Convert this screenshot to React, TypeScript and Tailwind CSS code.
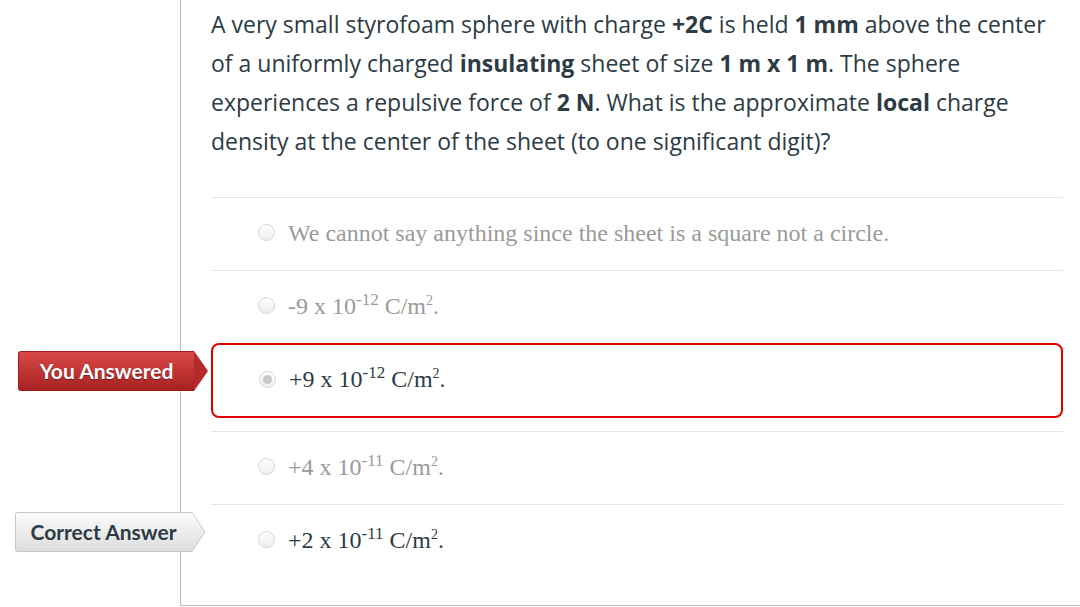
import React from "react";

type Answer = {
  text: React.ReactNode;
  faded: boolean;
  selected?: boolean;
  badge?: "you" | "correct";
};

const Sci = ({ sign, mant, exp }: { sign: string; mant: string; exp: string }) => (
  <span>
    {sign}
    {mant} x 10<span className="text-[17px] relative top-[-9px]">{exp}</span> C/m
    <span className="text-[14px] relative top-[-9px]">2</span>.
  </span>
);

const answers: Answer[] = [
  { text: "We cannot say anything since the sheet is a square not a circle.", faded: true },
  { text: <Sci sign="-" mant="9" exp="-12" />, faded: true },
  { text: <Sci sign="+" mant="9" exp="-12" />, faded: false, selected: true, badge: "you" },
  { text: <Sci sign="+" mant="4" exp="-11" />, faded: true },
  { text: <Sci sign="+" mant="2" exp="-11" />, faded: false, badge: "correct" },
];

const Radio = ({ selected }: { selected?: boolean }) => (
  <span className="w-[17px] h-[17px] rounded-full border border-[#d6d6d6] bg-gradient-to-b from-white to-[#ededed] flex items-center justify-center shrink-0">
    {selected && <span className="w-[9px] h-[9px] rounded-full bg-[#c8c8c8]" />}
  </span>
);

const YouAnswered = () => (
  <div className="absolute left-[-193px] top-[8px] flex items-center">
    <div className="h-[40px] w-[176px] rounded-l-[3px] bg-gradient-to-b from-[#d94848] to-[#a82020] border border-[#9e1f1f] border-r-0 flex items-center justify-center text-white font-bold text-[21px] [font-family:Lato,sans-serif] [text-shadow:0_1px_1px_rgba(0,0,0,0.4)]">
      You Answered
    </div>
    <div className="w-0 h-0 border-y-[20px] border-y-transparent border-l-[14px] border-l-[#b52b2b]" />
  </div>
);

const CorrectAnswer = () => (
  <div className="absolute left-[-196px] top-[7px] flex items-center">
    <div className="h-[40px] w-[176px] rounded-l-[3px] bg-gradient-to-b from-[#fbfbfb] to-[#dedede] border border-[#c8c8c8] border-r-0 flex items-center justify-center text-[#2d3b45] font-bold text-[21px] [font-family:Lato,sans-serif]">
      Correct Answer
    </div>
    <div className="relative w-[15px] h-[40px]">
      <svg width="16" height="40" viewBox="0 0 16 40" className="absolute left-[-1px] top-0">
        <defs>
          <linearGradient id="cg" x1="0" y1="0" x2="0" y2="1">
            <stop offset="0" stopColor="#fbfbfb" />
            <stop offset="1" stopColor="#dedede" />
          </linearGradient>
        </defs>
        <path d="M0 0.5 L2 0.5 L15 20 L2 39.5 L0 39.5 Z" fill="url(#cg)" stroke="#c8c8c8" />
        <rect x="0" y="1" width="1.5" height="38" fill="url(#cg)" />
      </svg>
    </div>
  </div>
);

export default function App() {
  return (
    <div className="w-[1080px] h-[607px] bg-white flex overflow-hidden">
      {/* left gutter */}
      <div className="w-[180px] shrink-0" />

      {/* question panel */}
      <div className="w-[900px] h-[606px] border-l border-b border-[#b9b9b9]">
        <div className="pl-[30px] pr-[17px] pt-[5px]">
          <p className="text-[23px] leading-[39px] text-[#2d3b45] [font-family:'Open_Sans',sans-serif]">
            A very small styrofoam sphere with charge <b>+2C</b> is held <b>1 mm</b> above the center of a uniformly charged <b>insulating</b> sheet of size <b>1 m x 1 m</b>. The sphere experiences a repulsive force of <b>2 N</b>. What is the approximate <b>local</b> charge density at the center of the sheet (to one significant digit)?
          </p>

          <div className="mt-[36px] [font-family:'Liberation_Serif',serif] text-[24px]">
            {answers.map((a, i) => {
              const color = a.faded ? "text-[#9a9a9a]" : "text-[#2d3b45]";
              if (a.selected) {
                return (
                  <div key={i} className="relative">
                    <div className="h-[75px] border-[2.5px] border-[#e10000] rounded-[8px] flex items-center gap-[13px] pl-[46px] pb-[3px] mb-[13px]">
                      <Radio selected />
                      <span className={color}>{a.text}</span>
                    </div>
                    <YouAnswered />
                  </div>
                );
              }
              return (
                <div
                  key={i}
                  className="relative h-[73px] flex items-center gap-[13px] pl-[47px] pb-[3px] border-t border-[#e5e5e5]"
                >
                  <Radio />
                  <span className={color}>{a.text}</span>
                  {a.badge === "correct" && <CorrectAnswer />}
                </div>
              );
            })}
          </div>
        </div>
      </div>
    </div>
  );
}
